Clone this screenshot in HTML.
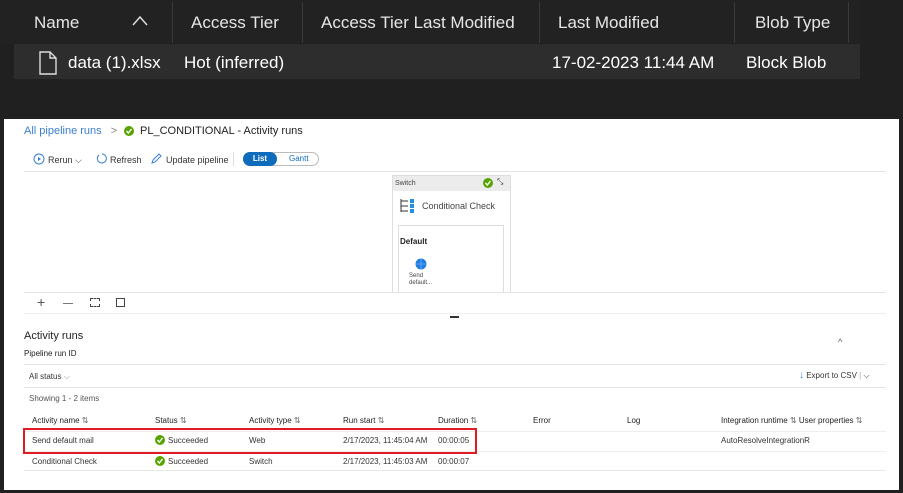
<!DOCTYPE html>
<html><head><style>
*{margin:0;padding:0;box-sizing:border-box}
body{width:903px;height:493px;background:#202020;font-family:"Liberation Sans",sans-serif;position:relative;overflow:hidden}
.a{position:absolute;white-space:nowrap}
.d{color:#e6e6e6;font-size:17px}
.s{font-size:9px;color:#333}
.l{position:absolute;height:1px;background:#e3e3e3}
</style></head><body>
<div class="a" style="left:0;top:0;width:860px;height:43px;background:#222"></div>
<div class="a" style="left:172px;top:2px;width:1px;height:41px;background:#3a3a3a"></div>
<div class="a" style="left:302px;top:2px;width:1px;height:41px;background:#3a3a3a"></div>
<div class="a" style="left:539px;top:2px;width:1px;height:41px;background:#3a3a3a"></div>
<div class="a" style="left:734px;top:2px;width:1px;height:41px;background:#3a3a3a"></div>
<div class="a" style="left:848px;top:2px;width:1px;height:41px;background:#3a3a3a"></div>
<div class="a d" style="left:34px;top:13px">Name</div>
<svg class="a" style="left:131px;top:15px" width="18" height="12"><path d="M2 10 L9 2 L16 10" stroke="#ddd" stroke-width="1.5" fill="none"/></svg>
<div class="a d" style="left:191px;top:13px">Access Tier</div>
<div class="a d" style="left:321px;top:13px">Access Tier Last Modified</div>
<div class="a d" style="left:558px;top:13px">Last Modified</div>
<div class="a d" style="left:755px;top:13px">Blob Type</div>
<div class="a" style="left:14px;top:44px;width:846px;height:35px;background:#2d2d2d"></div>
<svg class="a" style="left:38px;top:51px" width="20" height="24"><path d="M2 1 H12 L18 7 V23 H2 Z M12 1 V7 H18" stroke="#ddd" stroke-width="1.4" fill="none"/></svg>
<div class="a d" style="left:68px;top:53px;color:#fff">data (1).xlsx</div>
<div class="a d" style="left:184px;top:53px;color:#fff">Hot (inferred)</div>
<div class="a d" style="left:552px;top:53px;color:#fff">17-02-2023 11:44 AM</div>
<div class="a d" style="left:746px;top:53px;color:#fff">Block Blob</div>
<div class="a" style="left:4px;top:119px;width:895px;height:371px;background:#fff"></div>
<div class="a" style="left:24px;top:125px;font-size:11px;color:#3a7fd0">All pipeline runs <span style="color:#888;margin-left:6px">&gt;</span></div>
<svg class="a" style="left:124px;top:126px" width="10" height="10"><circle cx="5" cy="5" r="5" fill="#57a300"/><path d="M2.5 5 L4.3 7 L7.5 3" stroke="#fff" stroke-width="1.4" fill="none"/></svg>
<div class="a" style="left:140px;top:125px;font-size:11px;color:#222">PL_CONDITIONAL - Activity runs</div>
<svg class="a" style="left:33px;top:153px" width="12" height="12"><circle cx="6" cy="6" r="5" stroke="#3a7fd0" fill="none"/><path d="M5 4 L8 6 L5 8Z" fill="#3a7fd0"/></svg>
<div class="a s" style="left:48px;top:155px">Rerun ⌵</div>
<svg class="a" style="left:96px;top:153px" width="11" height="11"><path d="M3 2 A4.5 4.5 0 1 0 6 1" stroke="#3a7fd0" fill="none"/></svg>
<div class="a s" style="left:110px;top:155px">Refresh</div>
<svg class="a" style="left:151px;top:153px" width="11" height="11"><path d="M1 10 L2 7 L8 1 L10 3 L4 9Z" stroke="#3a7fd0" fill="none"/></svg>
<div class="a s" style="left:166px;top:155px">Update pipeline</div>
<div class="a" style="left:233px;top:152px;width:1px;height:14px;background:#ddd"></div>
<div class="a" style="left:243px;top:152px;width:76px;height:14px;border:1px solid #bbb;border-radius:7px"></div>
<div class="a" style="left:243px;top:152px;width:34px;height:14px;background:#0f6cbd;border-radius:7px;color:#fff;font-size:8px;text-align:center;line-height:14px;font-weight:bold">List</div>
<div class="a" style="left:289px;top:154px;font-size:8px;color:#0f6cbd">Gantt</div>
<div class="l" style="left:24px;top:171px;width:862px"></div>
<div class="a" style="left:392px;top:175px;width:119px;height:118px;border:1px solid #ddd;background:#fff"></div>
<div class="a" style="left:393px;top:176px;width:117px;height:15px;background:#ececec"></div>
<div class="a" style="left:395px;top:180px;font-size:7px;color:#444">Switch</div>
<svg class="a" style="left:483px;top:178px" width="10" height="10"><circle cx="5" cy="5" r="5" fill="#57a300"/><path d="M2.5 5 L4.3 7 L7.5 3" stroke="#fff" stroke-width="1.4" fill="none"/></svg>
<div class="a" style="left:497px;top:177px;font-size:8px;color:#333">⤡</div>
<svg class="a" style="left:399px;top:198px" width="16" height="16"><path d="M2 1 V14 M2 3 H9 M2 8 H9 M2 13 H9" stroke="#333" fill="none"/><rect x="11" y="1" width="4" height="4" fill="#1e90e8"/><rect x="11" y="6" width="4" height="4" fill="#1e90e8"/><rect x="11" y="11" width="4" height="4" fill="#1e90e8"/></svg>
<div class="a" style="left:422px;top:201px;font-size:9px;color:#444">Conditional Check</div>
<div class="a" style="left:398px;top:225px;width:106px;height:68px;border:1px solid #ddd;border-bottom:none"></div>
<div class="a" style="left:400px;top:237px;font-size:8px;color:#222;font-weight:bold">Default</div>
<svg class="a" style="left:415px;top:258px" width="12" height="12"><circle cx="6" cy="6" r="5.5" fill="#1e7fe0"/><path d="M0.5 6 H11.5 M6 0.5 V11.5" stroke="#8cc4ff" stroke-width="0.6"/></svg>
<div class="a" style="left:409px;top:273px;font-size:6px;color:#444;line-height:7px">Send<br>default...</div>
<div class="l" style="left:24px;top:292px;width:862px"></div>
<div class="a" style="left:37px;top:294px;font-size:14px;color:#555">+</div>
<div class="a" style="left:63px;top:303px;width:10px;height:1px;background:#777"></div>
<div class="a" style="left:90px;top:298px;width:10px;height:9px;border:1px dashed #444"></div>
<div class="a" style="left:116px;top:298px;width:9px;height:9px;border:1px solid #444"></div>
<div class="a" style="left:450px;top:316px;width:9px;height:2px;background:#333"></div>
<div class="l" style="left:24px;top:313px;width:862px;background:#eee"></div>
<div class="a" style="left:24px;top:330px;font-size:11px;color:#222">Activity runs</div>
<div class="a" style="left:838px;top:337px;font-size:9px;color:#555">^</div>
<div class="a" style="left:24px;top:349px;font-size:8px;color:#222">Pipeline run ID</div>
<div class="l" style="left:24px;top:364px;width:862px"></div>
<div class="a" style="left:29px;top:372px;font-size:8px;color:#333">All status <span style="color:#888">⌵</span></div>
<div class="a" style="left:799px;top:370px;font-size:8px;color:#333"><span style="color:#3a7fd0;font-size:10px">↓</span> Export to CSV <span style="color:#aaa">|</span> ⌵</div>
<div class="l" style="left:24px;top:387px;width:862px"></div>
<div class="a" style="left:29px;top:394px;font-size:8px;color:#555">Showing 1 - 2 items</div>
<div class="a" style="left:32px;top:416px;font-size:8px;color:#222">Activity name <span style="color:#666">⇅</span></div>
<div class="a" style="left:155px;top:416px;font-size:8px;color:#222">Status <span style="color:#666">⇅</span></div>
<div class="a" style="left:249px;top:416px;font-size:8px;color:#222">Activity type <span style="color:#666">⇅</span></div>
<div class="a" style="left:343px;top:416px;font-size:8px;color:#222">Run start <span style="color:#666">⇅</span></div>
<div class="a" style="left:438px;top:416px;font-size:8px;color:#222">Duration <span style="color:#666">⇅</span></div>
<div class="a" style="left:533px;top:416px;font-size:8px;color:#222">Error</div>
<div class="a" style="left:627px;top:416px;font-size:8px;color:#222">Log</div>
<div class="a" style="left:721px;top:416px;font-size:8px;color:#222">Integration runtime <span style="color:#666">⇅</span> User properties <span style="color:#666">⇅</span></div>
<div class="l" style="left:24px;top:431px;width:862px;background:#eee"></div>
<div class="a" style="left:32px;top:436px;font-size:8px;color:#333">Send default mail</div>
<svg class="a" style="left:155px;top:435px" width="10" height="10"><circle cx="5" cy="5" r="5" fill="#57a300"/><path d="M2.5 5 L4.3 7 L7.5 3" stroke="#fff" stroke-width="1.4" fill="none"/></svg>
<div class="a" style="left:168px;top:436px;font-size:8px;color:#333">Succeeded</div>
<div class="a" style="left:249px;top:436px;font-size:8px;color:#333">Web</div>
<div class="a" style="left:343px;top:436px;font-size:8px;color:#333">2/17/2023, 11:45:04 AM</div>
<div class="a" style="left:438px;top:436px;font-size:8px;color:#333">00:00:05</div>
<div class="a" style="left:721px;top:436px;font-size:8px;color:#333">AutoResolveIntegrationR</div>
<div class="l" style="left:24px;top:451px;width:862px;background:#eee"></div>
<div class="a" style="left:32px;top:457px;font-size:8px;color:#333">Conditional Check</div>
<svg class="a" style="left:155px;top:456px" width="10" height="10"><circle cx="5" cy="5" r="5" fill="#57a300"/><path d="M2.5 5 L4.3 7 L7.5 3" stroke="#fff" stroke-width="1.4" fill="none"/></svg>
<div class="a" style="left:168px;top:457px;font-size:8px;color:#333">Succeeded</div>
<div class="a" style="left:249px;top:457px;font-size:8px;color:#333">Switch</div>
<div class="a" style="left:343px;top:457px;font-size:8px;color:#333">2/17/2023, 11:45:03 AM</div>
<div class="a" style="left:438px;top:457px;font-size:8px;color:#333">00:00:07</div>
<div class="l" style="left:24px;top:470px;width:862px;background:#e8e8e8"></div>
<div class="a" style="left:23px;top:428px;width:454px;height:26px;border:2px solid #e01b24"></div>
</body></html>
